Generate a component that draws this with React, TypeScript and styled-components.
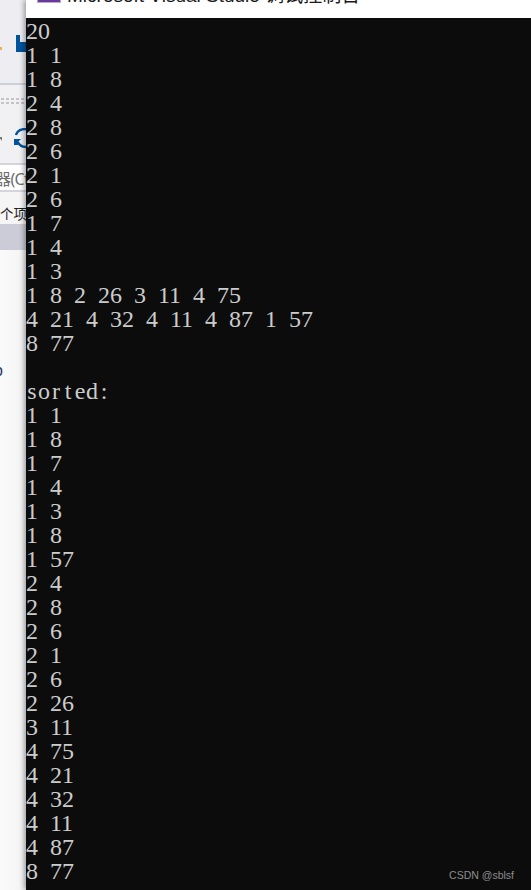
import React from 'react';
import styled, {createGlobalStyle} from "styled-components";

const GlobalStyle = createGlobalStyle`
  html, body {
    margin: 0;
    padding: 0;
    background: #ffffff;
  }
`
const Screen = styled.div`
  display: flex;
  width: 531px;
  height: 890px;
  overflow: hidden;
`
const Ide = styled.aside`
  display: flex;
  flex-direction: column;
  flex: 0 0 26px;
  width: 26px;
  overflow: hidden;
  background: #f7f7f8;
`
const Toolbar = styled.div`
  display: flex;
  justify-content: flex-end;
  align-items: flex-start;
  height: 85px;
  padding-top: 35px;
  box-sizing: border-box;
  background: #eeeef2;
  border-bottom: 2px solid #cfcfda;
  position: relative;
`
const Orange = styled.div`
  position: absolute;
  left: 0;
  top: 47px;
  width: 2px;
  height: 3px;
  background: #e8b25e;
`
const Tools = styled.div`
  height: 78px;
  background: #f1f1f4;
  padding-top: 12px;
  box-sizing: border-box;
  display: flex;
  flex-direction: column;
`
const Dots = styled.div`
  height: 8px;
  background-image: radial-gradient(#c4c4c8 1.2px, transparent 1.5px);
  background-size: 5px 4px;
`
const RefreshRow = styled.div`
  display: flex;
  justify-content: space-between;
  align-items: center;
  margin-top: 23px;
  height: 22px;
`
const Caret = styled.div`
  width: 0;
  height: 0;
  border-top: 4px solid #777;
  border-left: 3px solid transparent;
  margin-left: -1px;
`
const SearchBox = styled.div`
  height: 29px;
  box-sizing: border-box;
  background: #ffffff;
  border-top: 2px solid #d4d4dc;
  border-bottom: 2px solid #d4d4dc;
  display: flex;
  align-items: center;
  white-space: nowrap;
  overflow: hidden;
  font: 16px "Noto Sans", "Noto Sans CJK SC", sans-serif;
  letter-spacing: -0.6px;
  color: #6f6f6f;
`
const SearchText = styled.span`
  margin-left: -5px;
`
const CountRow = styled.div`
  height: 32px;
  padding-top: 9px;
  box-sizing: border-box;
  background: #f5f5f5;
  white-space: nowrap;
  font: 13.5px/24px "Noto Sans CJK SC", sans-serif;
  color: #1e1e1e;
`
const SelectedRow = styled.div`
  height: 26px;
  background: #ccccd8;
`
const TreeArea = styled.div`
  flex: 1;
  padding-top: 109px;
  background: linear-gradient(90deg, #fbfbfb, #f3f3f3);
  font: 16px/24px "Liberation Sans", sans-serif;
  color: #1f3c66;
`
const ClippedLetter = styled.div`
  margin-left: -6px;
`
const ConsoleWindow = styled.main`
  flex: 1;
  display: flex;
  flex-direction: column;
  position: relative;
  box-shadow: -2px 0 5px rgba(0, 0, 0, 0.35);
`
const TitleBar = styled.header`
  display: flex;
  align-items: flex-end;
  gap: 6px;
  height: 18px;
  padding: 0 0 12px 11px;
  box-sizing: border-box;
  background: #ffffff;
  overflow: hidden;
`
const TitleIcon = styled.div`
  flex: 0 0 24px;
  height: 14px;
  margin-bottom: 3px;
  box-sizing: border-box;
  background: #68389c;
  border: 1px solid #b9a9cc;
`
const TitleText = styled.span`
  font: 19px/20px "Liberation Sans", "Noto Sans CJK SC", sans-serif;
  color: #1a1a1a;
  white-space: nowrap;
`
const Terminal = styled.pre`
  flex: 1;
  margin: 0;
  padding: 1px 0 0 0;
  background: #0c0c0c;
  color: #cccccc;
  font: 24px/24px "Liberation Serif", serif;
  word-spacing: 6px;
  overflow: hidden;
`
const Line = styled.div`
  height: 24px;
`
const Cell = styled.span`
  display: inline-block;
  width: 12px;
  text-align: center;
`
const Watermark = styled.div`
  position: absolute;
  right: 17px;
  bottom: 8px;
  font: 10.5px/14px "Liberation Sans", sans-serif;
  color: #8c8c8c;
`

const LINES = [
    '20', '1 1', '1 8', '2 4', '2 8', '2 6', '2 1', '2 6', '1 7', '1 4', '1 3',
    '1 8 2 26 3 11 4 75', '4 21 4 32 4 11 4 87 1 57', '8 77', '', 'sorted:',
    '1 1', '1 8', '1 7', '1 4', '1 3', '1 8', '1 57',
    '2 4', '2 8', '2 6', '2 1', '2 6', '2 26', '3 11',
    '4 75', '4 21', '4 32', '4 11', '4 87', '8 77',
];

const App = () => {
    return (
        <>
            <GlobalStyle/>
            <Screen>
                <Ide>
                    <Toolbar>
                        <Orange/>
                        <svg width="10" height="17" viewBox="0 0 10 17">
                            <path d="M0 0h4v7h6v10H0z" fill="#00539c"/>
                        </svg>
                    </Toolbar>
                    <Tools>
                        <Dots/>
                        <RefreshRow>
                            <Caret/>
                            <svg width="12" height="22" viewBox="0 0 12 22" fill="none">
                                <path d="M2 7C3 3 7 1 12 1" stroke="#00539c" strokeWidth="2.4"/>
                                <path d="M12 19C8 19 5 17 3 13" stroke="#00539c" strokeWidth="2.6"/>
                                <path d="M0 11l7 0-2 2-1 0 0 4-4 0z" fill="#00539c"/>
                            </svg>
                        </RefreshRow>
                    </Tools>
                    <SearchBox><SearchText>器(Ct</SearchText></SearchBox>
                    <CountRow>个项</CountRow>
                    <SelectedRow/>
                    <TreeArea>
                        <ClippedLetter>o</ClippedLetter>
                    </TreeArea>
                </Ide>
                <ConsoleWindow>
                    <TitleBar>
                        <TitleIcon/>
                        <TitleText>Microsoft Visual Studio 调试控制台</TitleText>
                    </TitleBar>
                    <Terminal>
                        {LINES.map((line, i) => (
                            <Line key={i}>
                                {line === 'sorted:'
                                    ? line.split('').map((ch, j) => <Cell key={j}>{ch}</Cell>)
                                    : line}
                            </Line>
                        ))}
                    </Terminal>
                    <Watermark>CSDN @sblsf</Watermark>
                </ConsoleWindow>
            </Screen>
        </>
    );
};

export default App;
